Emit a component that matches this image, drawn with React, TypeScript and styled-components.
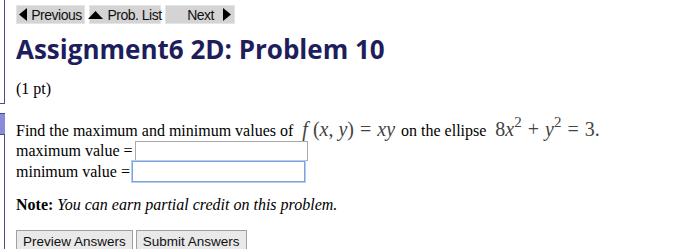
import styled, { createGlobalStyle } from "styled-components";

const Global = createGlobalStyle`
  html, body {
    margin: 0;
    padding: 0;
    background: #ffffff;
  }
  body {
    font-family: "Liberation Serif", "Times New Roman", serif;
    color: #000;
  }
`;

const Page = styled.div`
  width: 698px;
  height: 249px;
  overflow: hidden;
`;

const Header = styled.div`
  margin-left: 4px;
  border-left: 1px solid #4b4b8a;
  height: 104px;
  padding: 5px 0 0 11px;
  box-sizing: border-box;
  position: relative;
  &::after {
    content: "";
    position: absolute;
    left: -5px;
    bottom: 0;
    width: 5px;
    border-bottom: 1px solid #4b4b8a;
  }
`;

const Nav = styled.div`
  display: flex;
  gap: 4px;
`;

const NavButton = styled.div<{ $w: number; $end?: boolean }>`
  width: ${(p) => p.$w}px;
  height: 19px;
  box-sizing: border-box;
  background: #d4d4d4;
  border: 1px solid #e4e4e4;
  display: flex;
  align-items: center;
  justify-content: ${(p) => (p.$end ? "flex-end" : "center")};
  padding-right: ${(p) => (p.$end ? "3px" : "0")};
  gap: ${(p) => (p.$end ? "9px" : "4px")};
  white-space: nowrap;
  font-family: "Liberation Sans Narrow", "Liberation Sans", Arial, sans-serif;
  font-size: 14px;
  letter-spacing: -0.5px;
  color: #111;
`;

const Arrow = styled.svg`
  display: block;
  flex: none;
`;

const Title = styled.h1`
  margin: 9px 0 0;
  font-family: "Open Sans", "DejaVu Sans", sans-serif;
  font-weight: 700;
  font-size: 26px;
  line-height: 32px;
  color: #1e1e5c;
`;

const Points = styled.div`
  margin-top: 15px;
  font-size: 16px;
`;

const Problem = styled.div`
  margin-top: 9px;
  margin-left: 4px;
  border-left: 1px solid #4b4b8a;
  padding: 5px 0 0 11px;
  height: 136px;
  box-sizing: border-box;
  position: relative;
  font-size: 16px;
  &::before {
    content: "";
    position: absolute;
    left: -5px;
    top: 0;
    width: 5px;
    height: 20px;
    background: #8a8ad6;
    border-top: 1px solid #4b4b8a;
    border-bottom: 1px solid #4b4b8a;
  }
`;

const Line = styled.div`
  display: flex;
  align-items: baseline;
  height: 22px;
  white-space: pre;
`;

const Math = styled.span`
  font-size: 20px;
  font-family: "Liberation Serif", serif;
  color: #444;
  padding: 0 6px 0 5px;
`;

const Var = styled.i<{ $gap?: number }>`
  font-style: italic;
  margin-right: ${(p) => p.$gap ?? 0}px;
`;

const Op = styled.span`
  margin: 0 6px;
`;

const Sup = styled.sup`
  font-size: 15px;
  vertical-align: 9px;
  line-height: 0;
`;

const AnswerRow = styled.div`
  display: flex;
  align-items: center;
  height: 21px;
  white-space: pre;
`;

const Field = styled.input<{ $focus?: boolean }>`
  width: 173px;
  height: ${(p) => (p.$focus ? 21 : 20)}px;
  box-sizing: border-box;
  margin-left: 2px;
  border: 1px solid ${(p) => (p.$focus ? "#7da2e0" : "#a9a9a9")};
  box-shadow: ${(p) => (p.$focus ? "0 0 0 1px #b4cdf5" : "none")};
  outline: none;
  padding: 0;
`;

const Note = styled.p`
  margin: 14px 0 0;
  font-size: 16px;
  b {
    font-weight: 700;
  }
  i {
    font-style: italic;
  }
`;

const Actions = styled.div`
  display: flex;
  gap: 3px;
  margin-top: 16px;
`;

const Button = styled.button`
  font-family: "Liberation Sans", Arial, sans-serif;
  font-size: 13.5px;
  color: #111;
  background: #e9e9e9;
  border: 1px solid #a0a0a0;
  padding: 2px 6px;
  height: 22px;
`;

export default function App() {
  return (
    <Page>
      <Global />
      <Header>
        <Nav>
          <NavButton $w={69}>
            <Arrow width="8" height="13" viewBox="0 0 8 13">
              <path d="M8 0 L0 6.5 L8 13 Z" fill="#000" />
            </Arrow>
            Previous
          </NavButton>
          <NavButton $w={72}>
            <Arrow width="15" height="8" viewBox="0 0 15 8">
              <path d="M0 8 L7.5 0 L15 8 Z" fill="#000" />
            </Arrow>
            Prob. List
          </NavButton>
          <NavButton $w={70} $end>
            Next
            <Arrow width="8" height="13" viewBox="0 0 8 13">
              <path d="M0 0 L8 6.5 L0 13 Z" fill="#000" />
            </Arrow>
          </NavButton>
        </Nav>
        <Title>Assignment6 2D: Problem 10</Title>
        <Points>(1 pt)</Points>
      </Header>
      <Problem>
        <Line>
          Find the maximum and minimum values of{" "}
          <Math>
            <Var $gap={5}>f</Var>(<Var>x</Var>, <Var>y</Var>)<Op>=</Op>
            <Var>xy</Var>
          </Math>
          on the ellipse{" "}
          <Math>
            8<Var>x</Var>
            <Sup>2</Sup>
            <Op>+</Op>
            <Var>y</Var>
            <Sup>2</Sup>
            <Op>=</Op>3.
          </Math>
        </Line>
        <AnswerRow>
          maximum value =<Field />
        </AnswerRow>
        <AnswerRow>
          minimum value =<Field $focus />
        </AnswerRow>
        <Note>
          <b>Note:</b> <i>You can earn partial credit on this problem.</i>
        </Note>
        <Actions>
          <Button>Preview Answers</Button>
          <Button>Submit Answers</Button>
        </Actions>
      </Problem>
    </Page>
  );
}
